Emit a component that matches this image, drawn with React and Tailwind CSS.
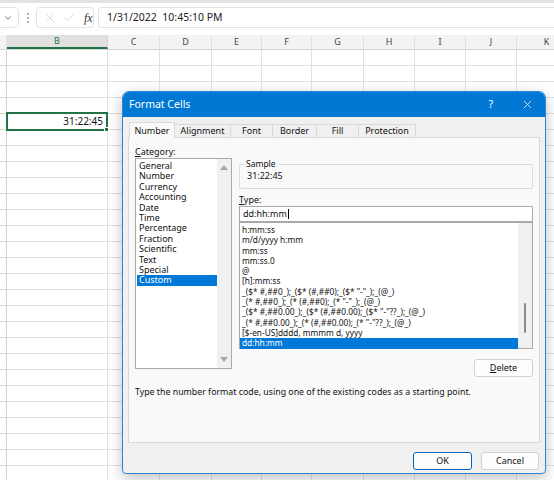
import { ChevronDown, X, Check } from 'lucide-react';

const font = { fontFamily: '"Segoe UI", "Noto Sans", "Open Sans", sans-serif' };

const columns = [
  { name: '', w: 7 },
  { name: 'B', w: 101 },
  { name: 'C', w: 52 },
  { name: 'D', w: 52 },
  { name: 'E', w: 50 },
  { name: 'F', w: 50 },
  { name: 'G', w: 52 },
  { name: 'H', w: 51 },
  { name: 'I', w: 51 },
  { name: 'J', w: 51 },
  { name: 'K', w: 60 },
];

const categories = [
  'General', 'Number', 'Currency', 'Accounting', 'Date', 'Time',
  'Percentage', 'Fraction', 'Scientific', 'Text', 'Special', 'Custom',
];

const formats = [
  'h:mm:ss',
  'm/d/yyyy h:mm',
  'mm:ss',
  'mm:ss.0',
  '@',
  '[h]:mm:ss',
  '_($* #,##0_);_($* (#,##0);_($* "-"_);_(@_)',
  '_(* #,##0_);_(* (#,##0);_(* "-"_);_(@_)',
  '_($* #,##0.00_);_($* (#,##0.00);_($* "-"??_);_(@_)',
  '_(* #,##0.00_);_(* (#,##0.00);_(* "-"??_);_(@_)',
  '[$-en-US]dddd, mmmm d, yyyy',
  'dd:hh:mm',
];

const tabs = [
  { name: 'Number', w: 46 },
  { name: 'Alignment', w: 56 },
  { name: 'Font', w: 42 },
  { name: 'Border', w: 44 },
  { name: 'Fill', w: 42 },
  { name: 'Protection', w: 57 },
];

function FormulaBar() {
  return (
    <div className="bg-white">
      <div className="h-[3px] bg-[#e2e2e2]" />
      <div className="flex items-center h-[27px] pt-[2px]">
        <div className="w-[23px] h-[21px] -ml-1 rounded-r border border-[#e3e3e3] flex items-center justify-end pr-[5px]">
          <ChevronDown className="w-[10px] h-[10px] text-[#555]" strokeWidth={2} />
        </div>
        <div className="w-[17px] flex flex-col items-center gap-[2px]">
          <span className="w-[2px] h-[2px] bg-[#b0b0b0]" />
          <span className="w-[2px] h-[2px] bg-[#b0b0b0]" />
          <span className="w-[2px] h-[2px] bg-[#b0b0b0]" />
        </div>
        <div className="w-[58px] h-[21px] rounded border border-[#e3e3e3] flex items-center pl-[7px] gap-[7px]">
          <X className="w-[12px] h-[12px] text-[#c8c8c8]" strokeWidth={1.3} />
          <Check className="w-[12px] h-[12px] text-[#c8c8c8]" strokeWidth={1.3} />
          <span className="text-[12px] italic text-[#333] leading-none ml-[2px]" style={{ fontFamily: '"Liberation Serif", serif' }}>fx</span>
        </div>
        <div className="ml-[4px] flex-1 h-[21px] rounded-l border border-r-0 border-[#e3e3e3] flex items-center pl-[8px] text-[10.5px] text-[#222]">
          1/31/2022&nbsp; 10:45:10 PM
        </div>
      </div>
      <div className="h-[5px]" />
    </div>
  );
}

function Grid() {
  return (
    <div>
      <div className="flex h-[15px] bg-[#f3f3f3] border-b border-[#d4d4d4]">
        {columns.map((c) => (
          <div
            key={c.name || 'corner'}
            style={{ width: c.w }}
            className={
              c.name === 'B'
                ? 'shrink-0 flex items-center justify-center text-[9px] text-[#217346] bg-[#e1e1e1] border-b-2 border-[#217346] border-r border-r-[#d4d4d4]'
                : 'shrink-0 flex items-center justify-center text-[9px] text-[#444] border-r border-[#e0e0e0]'
            }
          >
            {c.name}
          </div>
        ))}
      </div>
      {Array.from({ length: 27 }).map((_, r) => (
        <div key={r} className="flex h-[16px]">
          {columns.map((c, i) => (
            <div
              key={i}
              style={{ width: c.w }}
              className={
                i === 0
                  ? 'shrink-0 border-r border-b border-[#d4d4d4] bg-white'
                  : 'shrink-0 relative border-r border-b border-[#e1e1e1]'
              }
            >
              {r === 4 && c.name === 'B' && (
                <div className="absolute -left-[1px] -top-[2px] w-[102px] h-[19px] border-2 border-[#217346] flex items-center justify-end pr-[3px] text-[10px] text-[#111] z-10">
                  31:22:45
                  <span className="absolute -right-[3px] -bottom-[3px] w-[5px] h-[5px] bg-[#217346] border border-white" />
                </div>
              )}
            </div>
          ))}
        </div>
      ))}
    </div>
  );
}

function ScrollArrows() {
  return (
    <div className="w-[14px] shrink-0 bg-[#f0f0f0] flex flex-col justify-between items-center py-[6px]">
      <span className="w-0 h-0 border-l-[4px] border-r-[4px] border-b-[5px] border-l-transparent border-r-transparent border-b-[#a8a8a8]" />
      <span className="w-0 h-0 border-l-[4px] border-r-[4px] border-t-[5px] border-l-transparent border-r-transparent border-t-[#a8a8a8]" />
    </div>
  );
}

function Dialog() {
  return (
    <div className="absolute left-[122px] top-[91px] w-[424px] h-[383px] rounded-t-[7px] rounded-b-[4px] border border-[#2b88d8] bg-[#f0f0f0] shadow-[0_4px_14px_rgba(0,0,0,0.25)] flex flex-col overflow-hidden">
      <div className="h-[25px] shrink-0 bg-[#0078d4] flex items-center text-white">
        <span className="pl-[6px] text-[10.5px] flex-1">Format Cells</span>
        <span className="w-[36px] text-center text-[11px]">?</span>
        <span className="w-[36px] flex justify-center">
          <X className="w-[13px] h-[13px]" strokeWidth={1.3} />
        </span>
      </div>

      <div className="flex-1 px-[5px] pt-[5px] flex flex-col">
        <div className="flex items-end h-[16px] pl-[1px] relative z-10">
          {tabs.map((t, i) => (
            <div
              key={t.name}
              style={{ width: t.w }}
              className={
                i === 0
                  ? 'h-[16px] bg-[#f9f9f9] border border-b-0 border-[#d9d9d9] flex items-center justify-center text-[9px] text-[#111]'
                  : 'h-[14px] border border-l-0 border-[#d9d9d9] flex items-center justify-center text-[9px] text-[#111]'
              }
            >
              {t.name}
            </div>
          ))}
        </div>

        <div className="h-[306px] -mt-[1px] bg-[#f9f9f9] border border-[#d9d9d9] px-[6px] pt-[7px] text-[9px] text-[#111]">
          <div className="flex gap-[7px]">
            <div className="w-[97px] shrink-0">
              <div className="h-[13px] leading-[13px]">
                <span className="underline">C</span>ategory:
              </div>
              <div className="h-[211px] bg-white border border-[#a9a9a9] flex">
                <div className="flex-1 pt-[2px] pl-[1px]">
                  {categories.map((c) => (
                    <div
                      key={c}
                      className={
                        c === 'Custom'
                          ? 'h-[10.4px] leading-[10.4px] pl-[2px] bg-[#0078d7] text-white'
                          : 'h-[10.4px] leading-[10.4px] pl-[2px]'
                      }
                    >
                      {c}
                    </div>
                  ))}
                </div>
                <ScrollArrows />
              </div>
            </div>

            <div className="w-[295px] pt-[14px]">
              <fieldset className="h-[30px] border border-[#dcdcdc] rounded-[2px] px-[7px]">
                <legend className="px-[2px] -ml-[3px] text-[8.5px] leading-[10px]">Sample</legend>
                <div className="leading-[12px] pt-[1px]">31:22:45</div>
              </fieldset>
              <div className="h-[17px] pt-[4px] leading-[13px]">
                <span className="underline">T</span>ype:
              </div>
              <div className="h-[16px] bg-white border border-[#a9a9a9] flex items-center pl-[3px]">
                dd:hh:mm<span className="w-px h-[10px] bg-black ml-px" />
              </div>
              <div className="h-[127px] bg-white border border-[#a9a9a9] flex text-[8.3px]">
                <div className="flex-1 pt-[2px]">
                  {formats.map((f) => (
                    <div
                      key={f}
                      className={
                        f === 'dd:hh:mm'
                          ? 'h-[10.3px] leading-[10.3px] pl-[2px] bg-[#0078d7] text-white whitespace-nowrap'
                          : 'h-[10.3px] leading-[10.3px] pl-[2px] whitespace-nowrap'
                      }
                    >
                      {f}
                    </div>
                  ))}
                </div>
                <div className="w-[14px] shrink-0 bg-[#f0f0f0] flex justify-center pt-[80px]">
                  <span className="w-[2px] h-[30px] bg-[#8a8a8a] rounded" />
                </div>
              </div>
              <div className="flex justify-end mt-[10px]">
                <button className="w-[59px] h-[18px] bg-[#fdfdfd] border border-[#d0d0d0] rounded-[3px] text-[9px]">
                  <span className="underline">D</span>elete
                </button>
              </div>
            </div>
          </div>
          <div className="mt-[9px] leading-[12px] text-[8.8px]">
            Type the number format code, using one of the existing codes as a starting point.
          </div>
        </div>

        <div className="flex justify-end gap-[9px] mt-[9px] pr-[1px] text-[9px] text-[#111]">
          <button className="w-[59px] h-[18px] bg-[#fdfdfd] border border-[#0067c0] rounded-[3px]">OK</button>
          <button className="w-[58px] h-[18px] bg-[#fdfdfd] border border-[#d0d0d0] rounded-[3px]">Cancel</button>
        </div>
      </div>
    </div>
  );
}

export default function App() {
  return (
    <div className="relative w-[554px] h-[480px] overflow-hidden bg-white" style={font}>
      <FormulaBar />
      <Grid />
      <Dialog />
    </div>
  );
}
